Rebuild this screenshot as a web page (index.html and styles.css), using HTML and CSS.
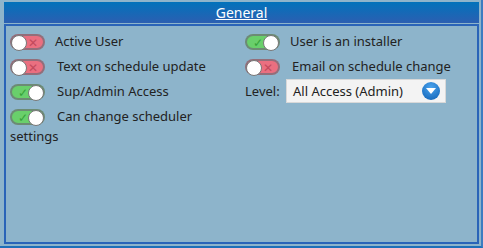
FILE: index.html
```html
<!DOCTYPE html>
<html lang="en">
<head>
    <meta charset="UTF-8">
    <title>General</title>
    <link rel="stylesheet" href="styles.css">
</head>
<body>
    <div class="frame">
        <div class="panel-title"><a href="#">General</a></div>
        <div class="panel">
            <div class="col left">
                <div class="row"><span class="toggle off"></span><span class="lbl">Active User</span></div>
                <div class="row"><span class="toggle off"></span><span class="lbl sp">Text on schedule update</span></div>
                <div class="row"><span class="toggle on"></span><span class="lbl sp">Sup/Admin Access</span></div>
                <div class="row"><span class="toggle on"></span><span class="lbl sp">Can change scheduler settings</span></div>
            </div>
            <div class="col">
                <div class="row"><span class="toggle on"></span><span class="lbl">User is an installer</span></div>
                <div class="row"><span class="toggle off"></span><span class="lbl sp">Email on schedule change</span></div>
                <div class="row level">
                    <span class="level-label">Level:</span>
                    <div class="select">
                        <span>All Access (Admin)</span>
                        <span class="drop"></span>
                    </div>
                </div>
            </div>
        </div>
    </div>
</body>
</html>
```

FILE: styles.css
```css
* {
    box-sizing: border-box;
}
body {
    margin: 0;
    background: #8db4cb;
    font-family: "Noto Sans", "Open Sans", sans-serif;
    font-size: 13px;
    color: #222;
}
.frame {
    width: 483px;
    height: 248px;
    padding: 2px 2px 0 4px;
    border-right: 2px solid #3d7cc0;
    border-bottom: 2px solid #1f6fb8;
}
.panel-title {
    height: 21px;
    background: linear-gradient(#0172bb, #2c5fb1);
    text-align: center;
    line-height: 21px;
    font-size: 14px;
}
.panel-title a {
    color: #fff;
}
.panel {
    margin-top: 1px;
    height: 220px;
    border: 2px solid #2a64b8;
    padding: 5px 0 0 4px;
    display: grid;
    grid-template-columns: 235px 1fr;
}
.col.left {
    padding-right: 12px;
}
.row {
    line-height: 20px;
    margin-bottom: 5px;
}
.toggle {
    display: inline-block;
    position: relative;
    width: 35px;
    height: 16px;
    border: 2px solid rgba(110, 110, 120, 0.7);
    border-radius: 9px;
    vertical-align: -4px;
    margin-right: 10px;
}
.toggle::before {
    content: "";
    position: absolute;
    top: -1px;
    width: 14px;
    height: 14px;
    border-radius: 50%;
    background: #fff;
    border: 1px solid #777;
}
.toggle::after {
    position: absolute;
    top: -3px;
    font-size: 12px;
}
.toggle.off {
    background: #ea6f80;
}
.toggle.off::before {
    left: -1px;
}
.toggle.off::after {
    content: "\2715";
    right: 5px;
    color: #c24a5c;
}
.toggle.on {
    background: #69cf6b;
}
.toggle.on::before {
    right: -1px;
}
.toggle.on::after {
    content: "\2713";
    left: 6px;
    color: #36a23a;
}
.lbl.sp {
    margin-left: 2px;
}
.level {
    display: flex;
    align-items: center;
    margin-top: -2px;
}
.level-label {
    width: 41px;
}
.select {
    width: 160px;
    height: 24px;
    background: #f3f3f3;
    border: 1px solid #d8d8d8;
    display: flex;
    align-items: center;
    justify-content: space-between;
    padding: 0 5px 0 6px;
}
.drop {
    position: relative;
    width: 18px;
    height: 18px;
    border-radius: 50%;
    background: radial-gradient(circle at 50% 30%, #4aa3ee, #0d5fb3);
}
.drop::after {
    content: "";
    position: absolute;
    left: 4px;
    top: 6px;
    border-left: 5px solid transparent;
    border-right: 5px solid transparent;
    border-top: 6px solid #fff;
}
```
